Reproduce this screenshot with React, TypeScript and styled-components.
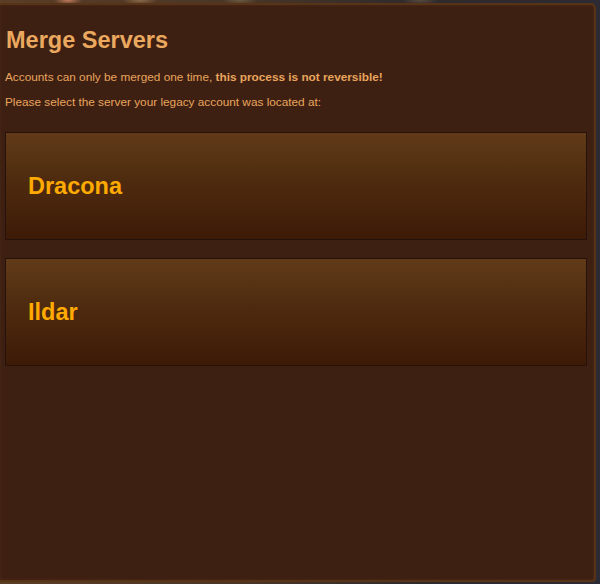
import React from "react";
import styled, { createGlobalStyle } from "styled-components";

const Global = createGlobalStyle`
  html, body { margin: 0; padding: 0; }
  body {
    width: 600px;
    height: 584px;
    overflow: hidden;
    background: #2a221c;
    font-family: "Liberation Sans", Arial, sans-serif;
  }
`;

const Backdrop = styled.div`
  width: 600px;
  height: 584px;
  background:
    radial-gradient(ellipse 14px 5px at 68px 0px, #c07a5c, transparent),
    radial-gradient(ellipse 18px 5px at 140px 0px, #8a6a48, transparent),
    radial-gradient(ellipse 18px 5px at 240px 0px, #6c5a40, transparent),
    radial-gradient(ellipse 18px 5px at 420px 0px, #5a4a3c, transparent),
    linear-gradient(90deg, #5a3e26 0%, #4a3526 40%, #2f2a2c 70%, #2c2a34 100%);
  padding-top: 3px;
  box-sizing: border-box;
`;

const Panel = styled.div`
  box-sizing: border-box;
  width: 596px;
  height: 579px;
  background: #3e2013;
  border: 2px solid #573318;
  border-left: none;
  border-radius: 0 5px 4px 0;
  box-shadow: inset 0 0 2px rgba(110, 70, 30, 0.5);
  padding: 21px 7px 0 5px;
`;

const Title = styled.h1`
  margin: 0 0 16px 1px;
  font-size: 23.5px;
  line-height: 28px;
  font-weight: bold;
  color: #eba95f;
`;

const Text = styled.p`
  margin: 0 0 10px 0;
  font-size: 11.8px;
  line-height: 15px;
  color: #e9a55c;
  b { font-weight: bold; }
`;

const List = styled.div`
  display: flex;
  flex-direction: column;
  gap: 18px;
  margin-top: 22px;
`;

const ServerCard = styled.button`
  box-sizing: border-box;
  height: 108px;
  width: 100%;
  display: flex;
  align-items: center;
  padding: 0 0 0 22px;
  border: 1px solid #26120a;
  background: linear-gradient(180deg, #613b18 0%, #4e2b0f 45%, #3d1a06 100%);
  cursor: pointer;
  text-align: left;
  font-family: "Liberation Sans", Arial, sans-serif;
  font-size: 23.5px;
  font-weight: bold;
  color: #ffaa00;
`;

const servers = ["Dracona", "Ildar"];

export default function App() {
  return (
    <>
      <Global />
      <Backdrop>
        <Panel>
          <Title>Merge Servers</Title>
          <Text>
            Accounts can only be merged one time, <b>this process is not reversible!</b>
          </Text>
          <Text>Please select the server your legacy account was located at:</Text>
          <List>
            {servers.map((s) => (
              <ServerCard key={s}>{s}</ServerCard>
            ))}
          </List>
        </Panel>
      </Backdrop>
    </>
  );
}
